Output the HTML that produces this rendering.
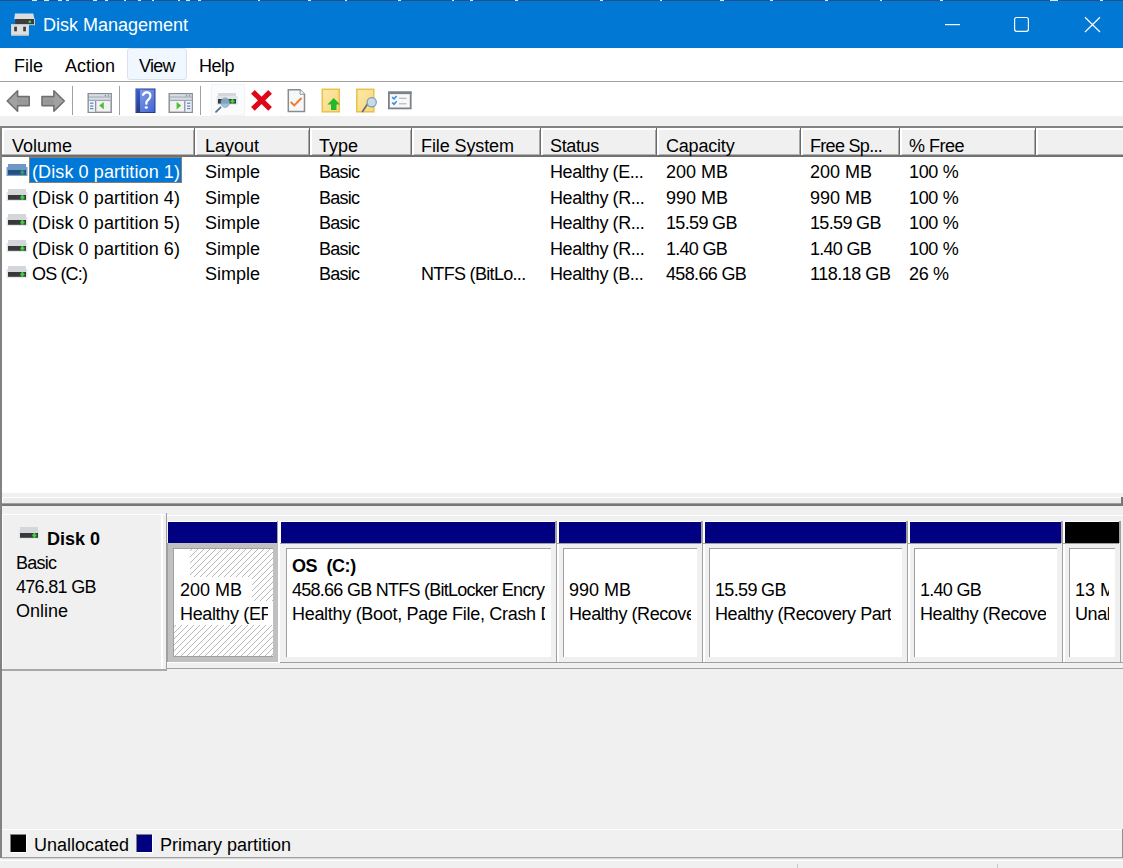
<!DOCTYPE html>
<html><head><meta charset="utf-8">
<style>
*{margin:0;padding:0;box-sizing:border-box}
html,body{width:1123px;height:868px;overflow:hidden;background:#f0f0f0;font-family:"Liberation Sans",sans-serif;font-size:18px;color:#000}
.a{position:absolute}
.t{position:absolute;white-space:pre;line-height:24px;height:24px}
#title{left:0;top:0;width:1123px;height:48px;background:#0078d4}
#menu{left:0;top:48px;width:1123px;height:34px;background:#fff}
#tb{left:0;top:82px;width:1123px;height:34px;background:#fff}
</style></head><body>
<svg width="0" height="0" style="position:absolute">
<defs>
<g id="drv">
<rect x="0.5" y="3" width="21" height="9" fill="#e4e7ea"/>
<rect x="2" y="0" width="18" height="6" fill="#d3d6da"/>
<rect x="2" y="6" width="18" height="4.8" fill="#383838"/>
<rect x="15.5" y="6" width="1.8" height="4.8" fill="#3bd83b"/>
<rect x="14.3" y="7.4" width="4.2" height="2" fill="#3bd83b"/>
</g>
<g id="drvsel">
<rect x="0.5" y="3" width="21" height="9" fill="#74a0cf"/>
<rect x="2" y="0" width="18" height="6" fill="#6d98c6"/>
<rect x="2" y="6" width="18" height="4.8" fill="#24507e"/>
<rect x="15.5" y="6" width="1.8" height="4.8" fill="#3a9a6a"/>
<rect x="14.3" y="7.4" width="4.2" height="2" fill="#3a9a6a"/>
</g>
</defs></svg>
<!-- title bar -->
<div id="title" class="a"></div>
<div class="a" style="left:0;top:0;width:1123px;height:1px;background:#24508a"></div><div class="a" style="left:32px;top:0;width:5px;height:1px;background:#dfe6ee"></div><div class="a" style="left:44px;top:0;width:5px;height:1px;background:#dfe6ee"></div><div class="a" style="left:58px;top:0;width:4px;height:1px;background:#dfe6ee"></div><div class="a" style="left:66px;top:0;width:3px;height:1px;background:#dfe6ee"></div><div class="a" style="left:93px;top:0;width:4px;height:1px;background:#dfe6ee"></div><div class="a" style="left:105px;top:0;width:3px;height:1px;background:#dfe6ee"></div><div class="a" style="left:124px;top:0;width:2px;height:1px;background:#dfe6ee"></div><div class="a" style="left:138px;top:0;width:3px;height:1px;background:#dfe6ee"></div><div class="a" style="left:152px;top:0;width:2px;height:1px;background:#dfe6ee"></div><div class="a" style="left:178px;top:0;width:2px;height:1px;background:#dfe6ee"></div><div class="a" style="left:186px;top:0;width:4px;height:1px;background:#dfe6ee"></div><div class="a" style="left:198px;top:0;width:3px;height:1px;background:#dfe6ee"></div><div class="a" style="left:258px;top:0;width:2px;height:1px;background:#dfe6ee"></div><div class="a" style="left:308px;top:0;width:3px;height:1px;background:#dfe6ee"></div><div class="a" style="left:345px;top:0;width:2px;height:1px;background:#dfe6ee"></div><div class="a" style="left:398px;top:0;width:3px;height:1px;background:#dfe6ee"></div><div class="a" style="left:452px;top:0;width:2px;height:1px;background:#dfe6ee"></div><div class="a" style="left:470px;top:0;width:3px;height:1px;background:#dfe6ee"></div><div class="a" style="left:515px;top:0;width:3px;height:1px;background:#dfe6ee"></div><div class="a" style="left:600px;top:0;width:3px;height:1px;background:#dfe6ee"></div><div class="a" style="left:660px;top:0;width:2px;height:1px;background:#dfe6ee"></div><div class="a" style="left:720px;top:0;width:4px;height:1px;background:#dfe6ee"></div><div class="a" style="left:770px;top:0;width:3px;height:1px;background:#dfe6ee"></div><div class="a" style="left:825px;top:0;width:3px;height:1px;background:#dfe6ee"></div><div class="a" style="left:880px;top:0;width:2px;height:1px;background:#dfe6ee"></div><div class="a" style="left:940px;top:0;width:3px;height:1px;background:#dfe6ee"></div><div class="a" style="left:1050px;top:0;width:8px;height:1px;background:#dfe6ee"></div><div class="a" style="left:1100px;top:0;width:3px;height:1px;background:#dfe6ee"></div>
<div class="t" style="left:43px;top:13px;color:#fff">Disk Management</div>

<!-- menu -->
<div id="menu" class="a"></div>
<div class="a" style="left:127px;top:48px;width:60px;height:32px;background:#f0f7fe;border:1px solid #d9e2ec;border-radius:3px"></div>
<div class="t" style="left:14px;top:54px">File</div>
<div class="t" style="left:65px;top:54px">Action</div>
<div class="t" style="left:139px;top:54px;letter-spacing:-0.7px">View</div>
<div class="t" style="left:199px;top:54px;letter-spacing:-0.5px">Help</div>
<div class="a" style="left:0;top:81px;width:1123px;height:1px;background:#a0a0a0"></div>

<!-- toolbar -->
<div id="tb" class="a"></div>
<!-- toolbar icons -->
<svg class="a" style="left:0;top:84px" width="1123" height="32">
<defs>
<linearGradient id="arrg" x1="0" y1="0" x2="0" y2="1"><stop offset="0" stop-color="#a6a6a6"/><stop offset="0.5" stop-color="#8a8a8a"/><stop offset="1" stop-color="#6e6e6e"/></linearGradient>
<linearGradient id="hlp" x1="0" y1="0" x2="1" y2="1"><stop offset="0" stop-color="#8aa6ee"/><stop offset="1" stop-color="#3f64d0"/></linearGradient>
<linearGradient id="spine" x1="0" y1="0" x2="0" y2="1"><stop offset="0" stop-color="#2f5fd6"/><stop offset="1" stop-color="#2a3a7c"/></linearGradient>
<linearGradient id="fld" x1="0" y1="0" x2="1" y2="1"><stop offset="0" stop-color="#fde9a8"/><stop offset="1" stop-color="#f6d77c"/></linearGradient>
</defs>
<!-- back -->
<path d="M7.2 17 L17.6 6.8 L17.6 12.6 L29.2 12.6 L29.2 21.6 L17.6 21.6 L17.6 27.3 Z" fill="#a2a2a2" stroke="#707070" stroke-width="1.6" stroke-linejoin="round"/><path d="M17 15 L27.5 15 L27.5 19.5 L17 19.5 Z" fill="#8c8c8c" opacity="0.45"/>
<!-- forward -->
<path d="M64.3 17 L53.9 6.8 L53.9 12.6 L42 12.6 L42 21.6 L53.9 21.6 L53.9 27.3 Z" fill="#a2a2a2" stroke="#707070" stroke-width="1.6" stroke-linejoin="round"/><path d="M43.5 15 L54 15 L54 19.5 L43.5 19.5 Z" fill="#8c8c8c" opacity="0.45"/>
<rect x="72" y="2" width="1" height="29" fill="#a0a0a0"/>
<!-- console tree icon -->
<g transform="translate(87.5,9)">
<rect x="0.7" y="0.7" width="23" height="18.6" fill="#f2f2f2" stroke="#878c93" stroke-width="1.4"/>
<rect x="1.4" y="1.4" width="21.6" height="2.2" fill="#d6dde7"/>
<rect x="17.3" y="1.6" width="1.3" height="1.8" fill="#8a94a2"/><rect x="20.3" y="1.6" width="1.3" height="1.8" fill="#8a94a2"/>
<rect x="1.4" y="3.6" width="21.6" height="1" fill="#8a94a2"/>
<rect x="1.4" y="4.8" width="21.6" height="2" fill="#d6dde7"/>
<rect x="1.4" y="6.8" width="21.6" height="1" fill="#8a94a2"/>
<rect x="1.4" y="8" width="6" height="10.6" fill="#eef0f3"/>
<rect x="7.5" y="8" width="1.3" height="10.6" fill="#8a94a2"/>
<rect x="2.6" y="9.6" width="3.2" height="1.2" fill="#4f86c6"/>
<rect x="2.6" y="12.5" width="3.2" height="1.2" fill="#4f86c6"/>
<rect x="2.6" y="15" width="3.2" height="1.2" fill="#4f86c6"/>
<path d="M11.7 12.6 L16.3 8.9 L16.3 16.5 Z" fill="#4fbf3a"/>
</g>
<rect x="119" y="2" width="1" height="29" fill="#a0a0a0"/>
<!-- help -->
<g transform="translate(135.5,4.5)">
<rect x="0.5" y="0.5" width="19" height="23.5" fill="url(#hlp)" stroke="#2a3a8a" stroke-width="1"/>
<rect x="1" y="1" width="3.6" height="22.5" fill="url(#spine)"/>
<path d="M7.6 6.2 Q9.5 3.2 12.3 3.9 Q15.6 4.8 14.6 8.6 Q13.8 10.6 12 12 Q10.7 13.2 10.8 15.2" fill="none" stroke="#fff" stroke-width="2.3" stroke-linecap="round"/>
<ellipse cx="10.8" cy="19" rx="1.6" ry="1.3" fill="#fff"/>
</g>
<!-- action pane icon -->
<g transform="translate(168.5,9)">
<rect x="0.7" y="0.7" width="23" height="18.6" fill="#f2f2f2" stroke="#878c93" stroke-width="1.4"/>
<rect x="1.4" y="1.4" width="21.6" height="2.2" fill="#d6dde7"/>
<rect x="17.3" y="1.6" width="1.3" height="1.8" fill="#8a94a2"/><rect x="20.3" y="1.6" width="1.3" height="1.8" fill="#8a94a2"/>
<rect x="1.4" y="3.6" width="21.6" height="1" fill="#8a94a2"/>
<rect x="1.4" y="4.8" width="21.6" height="2" fill="#d6dde7"/>
<rect x="1.4" y="6.8" width="21.6" height="1" fill="#8a94a2"/>
<rect x="17" y="8" width="6" height="10.6" fill="#eef0f3"/>
<rect x="15.6" y="8" width="1.3" height="10.6" fill="#8a94a2"/>
<rect x="18.6" y="9.6" width="3.2" height="1.2" fill="#4f86c6"/>
<rect x="18.6" y="12.5" width="3.2" height="1.2" fill="#4f86c6"/>
<rect x="18.6" y="15" width="3.2" height="1.2" fill="#4f86c6"/>
<path d="M12.7 12.6 L8.1 8.9 L8.1 16.5 Z" fill="#4fbf3a"/>
</g>
<rect x="200" y="2" width="1" height="29" fill="#a0a0a0"/>
<!-- rescan hover bg -->
<rect x="211.5" y="0.5" width="33" height="31" fill="#f9fbfd" stroke="#f1f5f9" stroke-width="1"/>
<g transform="translate(216,9)">
<rect x="2" y="0" width="18" height="4" fill="#d3d6da"/>
<rect x="0.7" y="3" width="21" height="8.7" fill="#e2e5e8"/>
<rect x="2" y="6" width="18" height="4.6" fill="#3a3a3a"/>
<rect x="15.6" y="6" width="1.8" height="4.6" fill="#3bd83b"/>
<rect x="14.4" y="7.3" width="4.2" height="2" fill="#3bd83b"/>
<line x1="4.6" y1="14.3" x2="0" y2="18.8" stroke="#5f7080" stroke-width="1.8" stroke-linecap="round"/>
<ellipse cx="9.2" cy="9.6" rx="4.3" ry="4.9" fill="#8fb6d6" fill-opacity="0.85" stroke="#7a9ab2" stroke-width="0.8" stroke-opacity="0.7"/>
</g>
<!-- red x -->
<path d="M252.9 7.8 L270.1 24.9 M270.1 7.8 L252.9 24.9" stroke="#e0061a" stroke-width="5.2"/>
<!-- doc check -->
<g transform="translate(287.5,5)">
<path d="M0.8 0.8 L12.6 0.8 L17 5.2 L17 22.6 L0.8 22.6 Z" fill="#f6f7f8" stroke="#8a8d90" stroke-width="1.5"/>
<path d="M12.6 0.8 L12.6 5.2 L17 5.2" fill="#fff" stroke="#8a8d90" stroke-width="1"/>
<path d="M3.2 13 L6.8 16.4 L14 9" fill="none" stroke="#f07a32" stroke-width="2"/>
</g>
<!-- folder up -->
<g transform="translate(321.5,4.5)">
<rect x="0.8" y="0.8" width="17" height="22.5" fill="url(#fld)" stroke="#e8c24a" stroke-width="1.5"/>
<path d="M9.5 21.5 L9.5 16 L6 16 L12.2 9.4 L18.5 16 L15 16 L15 21.5 Z" fill="#20b82e"/>
</g>
<!-- folder search -->
<g transform="translate(356,4.5)">
<rect x="0.8" y="0.8" width="17" height="22.5" fill="url(#fld)" stroke="#e8c24a" stroke-width="1.5"/>
<line x1="11.5" y1="15.5" x2="6.5" y2="23" stroke="#5b6b7b" stroke-width="1.6" stroke-linecap="round"/>
<circle cx="15.7" cy="13.7" r="4.6" fill="#c6dbea" stroke="#7f9aae" stroke-width="1.2"/>
</g>
<!-- checklist -->
<g transform="translate(388,7.5)">
<rect x="0.9" y="0.9" width="21.8" height="16" fill="#f7f8f9" stroke="#7d8287" stroke-width="1.8"/>
<rect x="0" y="0" width="23.6" height="2.6" fill="#7d8287"/>
<path d="M4.2 5.6 L6 7.4 L8.6 4.4" fill="none" stroke="#3a8de0" stroke-width="1.6"/>
<path d="M4.2 11 L6 12.8 L8.6 9.8" fill="none" stroke="#3a8de0" stroke-width="1.6"/>
<rect x="11" y="6.2" width="7.5" height="1.3" fill="#b8bcc0"/>
<rect x="11" y="11.6" width="7.5" height="1.3" fill="#b8bcc0"/>
</g>
</svg>
<!-- title icon -->
<svg class="a" style="left:10px;top:12px" width="27" height="26">
<path d="M5 1.4 L23.3 1.4 L24.5 7.2 L4.2 7.2 Z" fill="#dcdddf"/>
<rect x="5.2" y="7" width="19.3" height="5.2" fill="#3b3b3b"/>
<rect x="24" y="7" width="1" height="6.2" fill="#c9cacc"/>
<rect x="5.2" y="12.2" width="19.8" height="1" fill="#c9cacc"/>
<circle cx="19.8" cy="9.8" r="1.3" fill="#45d64a"/>
<rect x="1.1" y="12" width="17.8" height="11.6" fill="#dedfe0"/>
<rect x="1.1" y="12" width="17.8" height="1.2" fill="#c4c5c7"/>
<rect x="4.2" y="14.7" width="2.7" height="4.6" fill="#3e3e3e"/>
<rect x="13.2" y="14.7" width="2.7" height="4.6" fill="#3e3e3e"/>
<rect x="1.1" y="22.6" width="17.8" height="1" fill="#bcbdbf"/>
</svg>
<!-- window controls -->
<svg class="a" style="left:930px;top:0" width="193" height="48">
<rect x="15" y="24" width="15" height="1.2" fill="#fff"/>
<rect x="84.6" y="17.5" width="13.8" height="13.8" rx="2" fill="none" stroke="#fff" stroke-width="1.2"/>
<path d="M155 17.2 L170 32 M170 17.2 L155 32" stroke="#fff" stroke-width="1.2"/>
</svg>


<!-- list view -->
<div class="a" style="left:0;top:126px;width:1123px;height:2px;background:#828282"></div>
<div class="a" style="left:0;top:126px;width:2px;height:732px;background:#828282"></div>
<div class="a" style="left:2px;top:128px;width:1121px;height:29px;background:#f0f0f0"></div>
<div class="a" style="left:2px;top:157px;width:1121px;height:336px;background:#fff"></div>

<div class="a" style="left:2px;top:128px;width:1121px;height:2px;background:#fff"></div>
<div class="a" style="left:2px;top:128px;width:2px;height:27px;background:#fff"></div>
<div class="a" style="left:2px;top:154px;width:1121px;height:1px;background:#b4b4b4"></div>
<div class="a" style="left:2px;top:155px;width:1121px;height:2px;background:#707070"></div>
<div class="a" style="left:193px;top:130px;width:1px;height:25px;background:#a8a8a8"></div>
<div class="a" style="left:194px;top:128px;width:1px;height:27px;background:#6a6a6a"></div>
<div class="a" style="left:195px;top:128px;width:2px;height:27px;background:#fff"></div>
<div class="a" style="left:308px;top:130px;width:1px;height:25px;background:#a8a8a8"></div>
<div class="a" style="left:309px;top:128px;width:1px;height:27px;background:#6a6a6a"></div>
<div class="a" style="left:310px;top:128px;width:2px;height:27px;background:#fff"></div>
<div class="a" style="left:410px;top:130px;width:1px;height:25px;background:#a8a8a8"></div>
<div class="a" style="left:411px;top:128px;width:1px;height:27px;background:#6a6a6a"></div>
<div class="a" style="left:412px;top:128px;width:2px;height:27px;background:#fff"></div>
<div class="a" style="left:539px;top:130px;width:1px;height:25px;background:#a8a8a8"></div>
<div class="a" style="left:540px;top:128px;width:1px;height:27px;background:#6a6a6a"></div>
<div class="a" style="left:541px;top:128px;width:2px;height:27px;background:#fff"></div>
<div class="a" style="left:655px;top:130px;width:1px;height:25px;background:#a8a8a8"></div>
<div class="a" style="left:656px;top:128px;width:1px;height:27px;background:#6a6a6a"></div>
<div class="a" style="left:657px;top:128px;width:2px;height:27px;background:#fff"></div>
<div class="a" style="left:799px;top:130px;width:1px;height:25px;background:#a8a8a8"></div>
<div class="a" style="left:800px;top:128px;width:1px;height:27px;background:#6a6a6a"></div>
<div class="a" style="left:801px;top:128px;width:2px;height:27px;background:#fff"></div>
<div class="a" style="left:898px;top:130px;width:1px;height:25px;background:#a8a8a8"></div>
<div class="a" style="left:899px;top:128px;width:1px;height:27px;background:#6a6a6a"></div>
<div class="a" style="left:900px;top:128px;width:2px;height:27px;background:#fff"></div>
<div class="a" style="left:1034px;top:130px;width:1px;height:25px;background:#a8a8a8"></div>
<div class="a" style="left:1035px;top:128px;width:1px;height:27px;background:#6a6a6a"></div>
<div class="a" style="left:1036px;top:128px;width:2px;height:27px;background:#fff"></div>
<div class="t" style="left:12px;top:134px">Volume</div>
<div class="t" style="left:205px;top:134px">Layout</div>
<div class="t" style="left:319px;top:134px">Type</div>
<div class="t" style="left:421px;top:134px;letter-spacing:-0.1px">File System</div>
<div class="t" style="left:550px;top:134px;letter-spacing:-0.35px">Status</div>
<div class="t" style="left:666px;top:134px;letter-spacing:-0.2px">Capacity</div>
<div class="t" style="left:810px;top:134px;letter-spacing:-0.7px">Free Sp...</div>
<div class="t" style="left:909px;top:134px;letter-spacing:-0.5px">% Free</div>

<div class="a" style="left:29px;top:157px;width:153px;height:26px;background:#0078d7;border:1px solid #8a7e6e"></div>
<svg class="a" style="left:6px;top:164px" width="22" height="12"><use href="#drvsel"/></svg>
<div class="t" style="left:32px;top:160px;color:#fff;letter-spacing:0.1px">(Disk 0 partition 1)</div>
<div class="t" style="left:205px;top:160px">Simple</div>
<div class="t" style="left:319px;top:160px;letter-spacing:-0.78px">Basic</div>
<div class="t" style="left:550px;top:160px;letter-spacing:-0.43px">Healthy (E...</div>
<div class="t" style="left:666px;top:160px">200 MB</div>
<div class="t" style="left:810px;top:160px">200 MB</div>
<div class="t" style="left:909px;top:160px;letter-spacing:-0.35px">100 %</div>
<svg class="a" style="left:6px;top:189px" width="22" height="12"><use href="#drv"/></svg>
<div class="t" style="left:32px;top:185.5px;letter-spacing:0.1px">(Disk 0 partition 4)</div>
<div class="t" style="left:205px;top:185.5px">Simple</div>
<div class="t" style="left:319px;top:185.5px;letter-spacing:-0.78px">Basic</div>
<div class="t" style="left:550px;top:185.5px;letter-spacing:-0.43px">Healthy (R...</div>
<div class="t" style="left:666px;top:185.5px">990 MB</div>
<div class="t" style="left:810px;top:185.5px">990 MB</div>
<div class="t" style="left:909px;top:185.5px;letter-spacing:-0.35px">100 %</div>
<svg class="a" style="left:6px;top:214px" width="22" height="12"><use href="#drv"/></svg>
<div class="t" style="left:32px;top:211px;letter-spacing:0.1px">(Disk 0 partition 5)</div>
<div class="t" style="left:205px;top:211px">Simple</div>
<div class="t" style="left:319px;top:211px;letter-spacing:-0.78px">Basic</div>
<div class="t" style="left:550px;top:211px;letter-spacing:-0.43px">Healthy (R...</div>
<div class="t" style="left:666px;top:211px;letter-spacing:-0.66px">15.59 GB</div>
<div class="t" style="left:810px;top:211px;letter-spacing:-0.66px">15.59 GB</div>
<div class="t" style="left:909px;top:211px;letter-spacing:-0.35px">100 %</div>
<svg class="a" style="left:6px;top:240px" width="22" height="12"><use href="#drv"/></svg>
<div class="t" style="left:32px;top:236.5px;letter-spacing:0.1px">(Disk 0 partition 6)</div>
<div class="t" style="left:205px;top:236.5px">Simple</div>
<div class="t" style="left:319px;top:236.5px;letter-spacing:-0.78px">Basic</div>
<div class="t" style="left:550px;top:236.5px;letter-spacing:-0.43px">Healthy (R...</div>
<div class="t" style="left:666px;top:236.5px;letter-spacing:-0.73px">1.40 GB</div>
<div class="t" style="left:810px;top:236.5px;letter-spacing:-0.73px">1.40 GB</div>
<div class="t" style="left:909px;top:236.5px;letter-spacing:-0.35px">100 %</div>
<svg class="a" style="left:6px;top:266px" width="22" height="12"><use href="#drv"/></svg>
<div class="t" style="left:32px;top:262px;letter-spacing:-0.85px">OS (C:)</div>
<div class="t" style="left:205px;top:262px">Simple</div>
<div class="t" style="left:319px;top:262px;letter-spacing:-0.78px">Basic</div>
<div class="t" style="left:421px;top:262px;letter-spacing:-0.68px">NTFS (BitLo...</div>
<div class="t" style="left:550px;top:262px;letter-spacing:-0.43px">Healthy (B...</div>
<div class="t" style="left:666px;top:262px;letter-spacing:-0.66px">458.66 GB</div>
<div class="t" style="left:810px;top:262px;letter-spacing:-0.48px">118.18 GB</div>
<div class="t" style="left:909px;top:262px;letter-spacing:-0.33px">26 %</div>
<!-- splitter -->
<div class="a" style="left:2px;top:493px;width:1121px;height:11px;background:#f0f0f0"></div>
<div class="a" style="left:2px;top:497px;width:1119px;height:1px;background:#fff"></div>
<div class="a" style="left:2px;top:497px;width:1px;height:6px;background:#fff"></div>
<div class="a" style="left:3px;top:498px;width:1117px;height:5px;background:#ececec"></div>
<div class="a" style="left:2px;top:503px;width:1120px;height:1px;background:#a0a0a0"></div>
<div class="a" style="left:2px;top:504px;width:1121px;height:2px;background:#787878"></div>
<div class="a" style="left:1121px;top:497px;width:2px;height:8px;background:#787878"></div>
<!-- disk info panel -->
<div class="a" style="left:2px;top:514px;width:163px;height:1px;background:#fff"></div>
<div class="a" style="left:2px;top:514px;width:1px;height:156px;background:#fff"></div>
<div class="a" style="left:161px;top:514px;width:2px;height:155px;background:#fff"></div>
<div class="a" style="left:166px;top:513px;width:1px;height:157px;background:#a0a0a0"></div>
<div class="a" style="left:2px;top:669px;width:165px;height:2px;background:#a8a8a8"></div>
<div class="t" style="left:47px;top:527px;font-weight:bold">Disk 0</div>
<div class="t" style="left:16px;top:551px;letter-spacing:-0.78px">Basic</div>
<div class="t" style="left:16px;top:575px;letter-spacing:-0.7px">476.81 GB</div>
<div class="t" style="left:16px;top:599px">Online</div>
<svg class="a" style="left:18px;top:527px" width="22" height="13"><use href="#drv"/></svg>
<!-- partition area -->
<div class="a" style="left:167px;top:515px;width:956px;height:1px;background:#fff"></div>
<div class="a" style="left:280px;top:662px;width:843px;height:1px;background:#a0a0a0"></div>
<div class="a" style="left:167px;top:662px;width:113px;height:1px;background:#fff"></div>
<div class="a" style="left:167px;top:668px;width:956px;height:1px;background:#a0a0a0"></div>
<div class="a" style="left:168px;top:521px;width:109px;height:1px;background:#fff"></div>
<div class="a" style="left:168px;top:521px;width:2px;height:22px;background:#fff"></div>
<div class="a" style="left:168px;top:522px;width:109px;height:21px;background:#000080"></div>
<div class="a" style="left:168px;top:543px;width:109px;height:1px;background:#a0a0a0"></div>
<div class="a" style="left:277px;top:521px;width:1px;height:22px;background:#a0a0a0"></div>
<div class="a" style="left:278px;top:521px;width:2px;height:142px;background:#fff"></div>
<div class="a" style="left:279px;top:521px;width:276px;height:1px;background:#fff"></div>
<div class="a" style="left:278px;top:521px;width:3px;height:22px;background:#fff"></div>
<div class="a" style="left:281px;top:522px;width:274px;height:21px;background:#000080"></div>
<div class="a" style="left:280px;top:543px;width:275px;height:1px;background:#a0a0a0"></div>
<div class="a" style="left:555px;top:521px;width:2px;height:22px;background:#a0a0a0"></div><div class="a" style="left:556px;top:543px;width:1px;height:119px;background:#a0a0a0"></div><div class="a" style="left:557px;top:543px;width:2px;height:119px;background:#fff"></div>
<div class="a" style="left:557px;top:521px;width:144px;height:1px;background:#fff"></div>
<div class="a" style="left:557px;top:521px;width:2px;height:22px;background:#fff"></div>
<div class="a" style="left:559px;top:522px;width:142px;height:21px;background:#000080"></div>
<div class="a" style="left:557px;top:543px;width:144px;height:1px;background:#a0a0a0"></div>
<div class="a" style="left:701px;top:521px;width:2px;height:22px;background:#a0a0a0"></div><div class="a" style="left:702px;top:543px;width:1px;height:119px;background:#a0a0a0"></div><div class="a" style="left:703px;top:543px;width:2px;height:119px;background:#fff"></div>
<div class="a" style="left:703px;top:521px;width:203px;height:1px;background:#fff"></div>
<div class="a" style="left:703px;top:521px;width:2px;height:22px;background:#fff"></div>
<div class="a" style="left:705px;top:522px;width:201px;height:21px;background:#000080"></div>
<div class="a" style="left:703px;top:543px;width:203px;height:1px;background:#a0a0a0"></div>
<div class="a" style="left:906px;top:521px;width:2px;height:22px;background:#a0a0a0"></div><div class="a" style="left:907px;top:543px;width:1px;height:119px;background:#a0a0a0"></div><div class="a" style="left:908px;top:543px;width:2px;height:119px;background:#fff"></div>
<div class="a" style="left:908px;top:521px;width:153px;height:1px;background:#fff"></div>
<div class="a" style="left:908px;top:521px;width:2px;height:22px;background:#fff"></div>
<div class="a" style="left:910px;top:522px;width:151px;height:21px;background:#000080"></div>
<div class="a" style="left:908px;top:543px;width:153px;height:1px;background:#a0a0a0"></div>
<div class="a" style="left:1061px;top:521px;width:2px;height:22px;background:#a0a0a0"></div><div class="a" style="left:1062px;top:543px;width:1px;height:119px;background:#a0a0a0"></div><div class="a" style="left:1063px;top:543px;width:2px;height:119px;background:#fff"></div>
<div class="a" style="left:1063px;top:521px;width:56px;height:1px;background:#fff"></div>
<div class="a" style="left:1063px;top:521px;width:2px;height:22px;background:#fff"></div>
<div class="a" style="left:1065px;top:522px;width:54px;height:21px;background:#000"></div>
<div class="a" style="left:1063px;top:543px;width:56px;height:1px;background:#a0a0a0"></div>
<div class="a" style="left:1119px;top:521px;width:2px;height:22px;background:#a0a0a0"></div><div class="a" style="left:1120px;top:543px;width:1px;height:119px;background:#a0a0a0"></div>
<div class="a" style="left:286px;top:548px;width:265px;height:109px;background:#fff;border-left:1px solid #a0a0a0;border-top:1px solid #a0a0a0">
<div class="a" style="left:0;top:0;width:258px;height:108px;overflow:hidden">
<div class="t" style="left:5px;top:5px;font-weight:bold;letter-spacing:-0.4px">OS  (C:)</div>
<div class="t" style="left:5px;top:29px;letter-spacing:-0.74px">458.66 GB NTFS (BitLocker Encrypted)</div>
<div class="t" style="left:5px;top:53px;letter-spacing:-0.3px">Healthy (Boot, Page File, Crash Dump, Basic Data Partition)</div>
</div>
</div>
<div class="a" style="left:563px;top:548px;width:134px;height:109px;background:#fff;border-left:1px solid #a0a0a0;border-top:1px solid #a0a0a0">
<div class="a" style="left:0;top:0;width:127px;height:108px;overflow:hidden">
<div class="t" style="left:5px;top:29px">990 MB</div>
<div class="t" style="left:5px;top:53px;letter-spacing:-0.44px">Healthy (Recovery Partition)</div>
</div>
</div>
<div class="a" style="left:709px;top:548px;width:193px;height:109px;background:#fff;border-left:1px solid #a0a0a0;border-top:1px solid #a0a0a0">
<div class="a" style="left:0;top:0;width:181px;height:108px;overflow:hidden">
<div class="t" style="left:5px;top:29px;letter-spacing:-0.66px">15.59 GB</div>
<div class="t" style="left:5px;top:53px;letter-spacing:-0.44px">Healthy (Recovery Partition)</div>
</div>
</div>
<div class="a" style="left:914px;top:548px;width:143px;height:109px;background:#fff;border-left:1px solid #a0a0a0;border-top:1px solid #a0a0a0">
<div class="a" style="left:0;top:0;width:131px;height:108px;overflow:hidden">
<div class="t" style="left:5px;top:29px;letter-spacing:-0.73px">1.40 GB</div>
<div class="t" style="left:5px;top:53px;letter-spacing:-0.44px">Healthy (Recovery Partition)</div>
</div>
</div>
<div class="a" style="left:1069px;top:548px;width:46px;height:109px;background:#fff;border-left:1px solid #a0a0a0;border-top:1px solid #a0a0a0">
<div class="a" style="left:0;top:0;width:39px;height:108px;overflow:hidden">
<div class="t" style="left:5px;top:29px">13 MB</div>
<div class="t" style="left:5px;top:53px;letter-spacing:-0.4px">Unallocated</div>
</div>
</div>
<div class="a" style="left:168px;top:543px;width:110px;height:119px;background:#c0c0c0"></div>
<div class="a" style="left:166px;top:543px;width:2px;height:119px;background:#a0a0a0"></div>
<div class="a" style="left:173px;top:548px;width:100px;height:109px;border-left:1px solid #a0a0a0;border-top:1px solid #a0a0a0;border-bottom:1px solid #a0a0a0;background:#fff;overflow:hidden">
<svg class="a" style="left:0;top:0" width="100" height="110"><defs><pattern id="hat" patternUnits="userSpaceOnUse" width="6" height="6" x="0" y="0"><rect x="0" y="5" width="1" height="1" fill="#b8b8b8"/><rect x="1" y="4" width="1" height="1" fill="#b8b8b8"/><rect x="2" y="3" width="1" height="1" fill="#b8b8b8"/><rect x="3" y="2" width="1" height="1" fill="#b8b8b8"/><rect x="4" y="1" width="1" height="1" fill="#b8b8b8"/><rect x="5" y="0" width="1" height="1" fill="#b8b8b8"/></pattern></defs><rect width="100" height="110" fill="url(#hat)" shape-rendering="crispEdges"/></svg>
<div class="a" style="left:0;top:52px;width:99px;height:24px;background:#fff"></div>
<div class="a" style="left:0;top:0;width:94px;height:108px;overflow:hidden">
<div class="a" style="left:0;top:0;width:16px;height:28px;background:#fff"></div>
<div class="t" style="left:0;top:28px;background:#fff;padding-right:10px;padding-left:6px;padding-top:1px;height:24px">200 MB</div>
<div class="t" style="left:0;padding-left:6px;top:52px;background:#fff;width:100px;padding-top:1px;height:24px;letter-spacing:-0.35px">Healthy (EFI System Partition)</div>
</div>
</div>
<!-- legend -->
<div class="a" style="left:2px;top:829px;width:1121px;height:1px;background:#fff"></div>
<div class="a" style="left:2px;top:857px;width:1121px;height:1px;background:#a0a0a0"></div>
<div class="a" style="left:2px;top:858px;width:1121px;height:1px;background:#d8d8d8"></div>
<div class="a" style="left:0px;top:860px;width:1123px;height:1px;background:#fff"></div>
<div class="a" style="left:10px;top:834px;width:16px;height:18px;background:#000;border-left:1px solid #808080;border-top:1px solid #808080;box-shadow:1px 1px 0 #fff"></div>
<div class="t" style="left:34px;top:833px">Unallocated</div>
<div class="a" style="left:136px;top:834px;width:16px;height:18px;background:#000080;border-left:1px solid #808080;border-top:1px solid #808080;box-shadow:1px 1px 0 #fff"></div>
<div class="t" style="left:160px;top:833px">Primary partition</div>
<div class="a" style="left:797px;top:864px;width:1px;height:4px;background:#c8c8c8"></div>
<div class="a" style="left:997px;top:864px;width:1px;height:4px;background:#c8c8c8"></div>
<div class="a" style="left:1122px;top:829px;width:1px;height:29px;background:#909090"></div>
</body></html>
